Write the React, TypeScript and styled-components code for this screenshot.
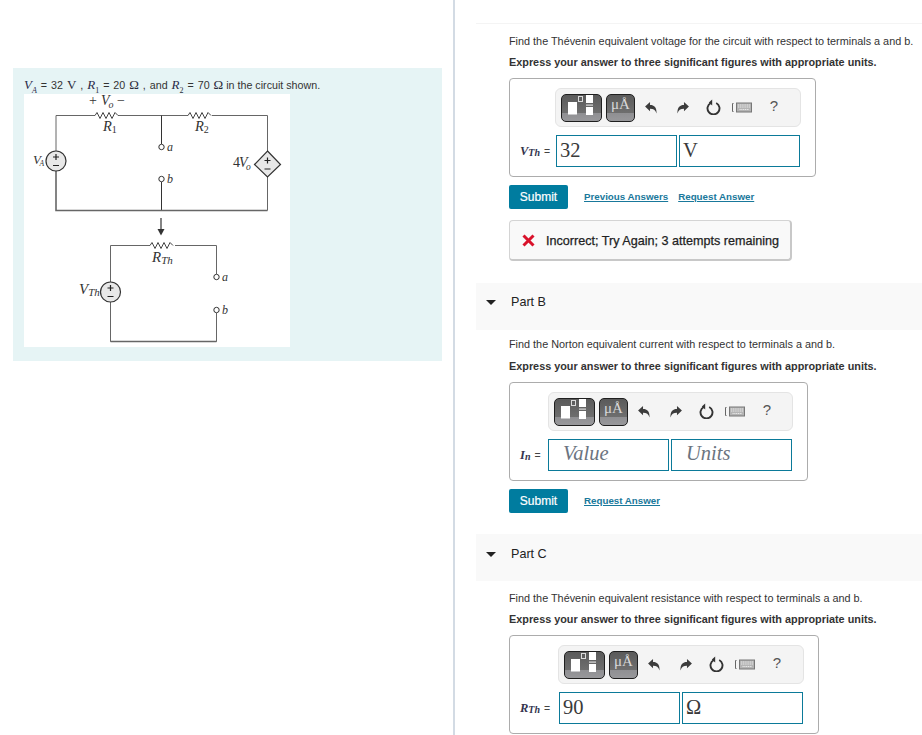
import React from "react";
import styled, { createGlobalStyle } from "styled-components";

const Global = createGlobalStyle`
  html, body { margin: 0; padding: 0; background: #fff; }
  body { font-family: "Liberation Sans", Arial, sans-serif; color: #2d2d2d; width: 922px; height: 735px; overflow: hidden; }
`;
const Page = styled.div`display: flex; width: 922px; height: 735px; overflow: hidden;`;
const LeftPane = styled.div`width: 455px; flex: none; padding: 68px 0 0 13px; box-sizing: border-box; border-right: 2px solid #d3dbe4;`;
const Intro = styled.div`width: 429px; height: 293px; background: #e6f4f5; padding: 10px 11px 0; box-sizing: border-box;`;
const IntroText = styled.div`font-size: 10.7px; line-height: 14px; height: 16px; white-space: nowrap; color: #333;`;
const MathRun = styled.span`word-spacing: 1px;`;
const MathVar = styled.span`font-family: "Liberation Serif", serif; font-style: italic; font-size: 13px; color: #2b2b4a;`;
const MathText = styled.span`font-family: "Liberation Serif", serif; font-size: 13px; color: #2b2b3a;`;
const Sub = styled.sub`font-size: 8px; line-height: 0;`;
const CircuitBox = styled.div`width: 266px; height: 253px; background: #fff; display: block;`;
const RightPane = styled.div`flex: 1; margin-left: 21px; margin-top: 23px; border-top: 1px solid #f4f4f4; min-width: 0;`;
const Part = styled.section<{ $top: number }>`padding: ${p => p.$top}px 0 0 33px;`;
const Para = styled.p<{ $strong?: boolean; $gap?: number }>`
  margin: ${p => p.$gap ?? 0}px 0 0; font-size: 10.85px; line-height: 14px; white-space: nowrap;
  font-weight: ${p => (p.$strong ? 700 : 400)}; color: #333;
`;
const AnswerBox = styled.div`
  display: grid; margin-top: 9px; border: 1px solid #acacac; border-radius: 4px;
  padding: 9px 13px 9px 10px; row-gap: 8px; box-sizing: border-box; width: max-content;
`;
const ToolbarWrap = styled.div<{ $offset: number; $width: number }>`
  margin-left: ${p => p.$offset}px; width: ${p => p.$width}px; height: 39px; box-sizing: border-box;
  border: 1px solid #e4e4e4; border-radius: 6px; background: #f4f4f4;
  display: flex; align-items: center; padding-left: 5px;
`;
const ToolBtn = styled.div<{ $w: number }>`
  width: ${p => p.$w}px; height: 28px; box-sizing: border-box; border: 1px solid #1f1f1f; border-radius: 5px;
  background: linear-gradient(#5a5a5a 0%, #6e6e6e 68%, #8f8f92 69%, #98989b 100%);
  margin-right: 4px; display: flex; align-items: center; justify-content: center; overflow: hidden; flex: none;
`;
const UnitGlyph = styled.span`font-family: "Liberation Serif", serif; font-size: 15px; color: #d8d8d8; margin-top: -6px; white-space: nowrap;`;
const IconSlot = styled.div<{ $w: number }>`width: ${p => p.$w}px; display: flex; justify-content: center; align-items: center; flex: none;`;
const Help = styled.span`font-size: 15px; color: #555; margin-top: -4px;`;
const InputRow = styled.div`display: flex; align-items: center;`;
const InputLabel = styled.div<{ $w: number }>`width: ${p => p.$w}px; flex: none; font-size: 10.5px; white-space: nowrap; color: #444;`;
const LabelVar = styled.span`font-family: "Liberation Serif", serif; font-style: italic; font-weight: 700; font-size: 12.5px; color: #33334d;`;
const LabelSub = styled.span`font-size: 10px; line-height: 0; vertical-align: -1px;`;
const LabelEq = styled.span`margin-left: 4px;`;
const Field = styled.div<{ $placeholder?: boolean }>`
  width: 121px; height: 32px; box-sizing: border-box; border: 1px solid #0b7a99; margin-right: 2px;
  font-family: "Liberation Serif", serif; font-size: 20.5px;
  line-height: ${p => (p.$placeholder ? 27 : 29)}px;
  padding-left: ${p => (p.$placeholder ? 14 : 3)}px;
  font-style: ${p => (p.$placeholder ? "italic" : "normal")};
  color: ${p => (p.$placeholder ? "#6b7480" : "#3a3a3a")};
`;
const ActionRow = styled.div`display: flex; align-items: center; margin-top: 8px;`;
const SubmitBtn = styled.div`
  width: 59px; height: 24px; background: #007c9f; color: #fff; border-radius: 2px; font-size: 12px;
  display: flex; align-items: center; justify-content: center; -webkit-text-stroke: 0.2px #fff; margin-right: 16px;
`;
const Link = styled.a`font-size: 9.75px; font-weight: 700; color: #19789b; text-decoration: underline; margin: -1px 10px 0 0; white-space: nowrap;`;
const Feedback = styled.div`
  margin-top: 11px; width: 283px; height: 41px; box-sizing: border-box; border: 1px solid #d4d4d4;
  border-bottom: 2px solid #c8c8c8; border-right: 2px solid #c8c8c8; border-radius: 4px; background: #f9f9f9;
  display: flex; align-items: center; padding: 1px 0 0 12px; font-size: 12.6px; color: #222; white-space: nowrap;
  -webkit-text-stroke: 0.25px #222;
`;
const FeedbackIcon = styled.svg`width: 13px; height: 13px; margin: -1px 11px 0 0; flex: none;`;
const PartHead = styled.div<{ $top: number; $lift: number }>`
  margin-top: ${p => p.$top}px; height: 47px; background: #f9f9f9; display: flex; align-items: center;
  font-size: 12.6px; color: #222; padding-bottom: ${p => p.$lift}px; box-sizing: border-box;
`;
const Caret = styled.span`
  width: 0; height: 0; border-left: 5px solid transparent; border-right: 5px solid transparent; border-top: 5px solid #222;
  margin: 0 15px 0 10px;
`;

const Undo = () => (
  <svg width="14" height="14" viewBox="0 0 13 13"><path d="M1 5.2 L5.6 1 V3.6 C9.6 3.6 12 6 11.6 11.6 C10.6 8.6 9 7.3 5.6 7.3 V9.6 Z" fill="#3c3c3c" /></svg>
);
const Redo = () => (
  <svg width="14" height="14" viewBox="0 0 13 13"><path d="M12 5.2 L7.4 1 V3.6 C3.4 3.6 1 6 1.4 11.6 C2.4 8.6 4 7.3 7.4 7.3 V9.6 Z" fill="#3c3c3c" /></svg>
);
const Reset = () => (
  <svg width="15" height="17" viewBox="0 0 15 17" style={{ marginTop: -2 }}><path d="M10.2 5 A6 6 0 1 1 4.8 5" fill="none" stroke="#333" strokeWidth="1.9" /><path d="M6.2 1.5 V7.6 L2.8 4.6 Z" fill="#333" /></svg>
);
const Keyboard = () => (
  <svg width="20" height="11" viewBox="0 0 20 11">
    <path d="M1.5 1.5 H0.5 V9.5 H1.5" fill="none" stroke="#666" strokeWidth="1" />
    <rect x="4.5" y="1" width="15" height="9" fill="#b4b4b4" stroke="#777" strokeWidth="1" />
    <path d="M6 3 H18 M6 5 H18 M7.5 7.5 H17" stroke="#e8e8e8" strokeWidth="1" strokeDasharray="1.2 .6" />
  </svg>
);
const TemplateIcon = () => (
  <svg width="38" height="26" viewBox="0 0 38 26">
    <rect x="5" y="7" width="9" height="12.5" fill="#fff" />
    <rect x="15.5" y="1.5" width="4" height="5" fill="none" stroke="#dcdcdc" strokeWidth="1" />
    <rect x="23" y="0" width="7" height="8" fill="#fff" />
    <rect x="23" y="9.5" width="7" height="1.2" fill="#ddd" />
    <rect x="23" y="12" width="7" height="8" fill="#fff" />
  </svg>
);

const Toolbar = ({ offset, width }: { offset: number; width: number }) => (
  <ToolbarWrap $offset={offset} $width={width}>
    <ToolBtn $w={41}><TemplateIcon /></ToolBtn>
    <ToolBtn $w={29}><UnitGlyph>μÅ</UnitGlyph></ToolBtn>
    <IconSlot $w={24}><Undo /></IconSlot>
    <IconSlot $w={40}><Redo /></IconSlot>
    <IconSlot $w={20}><Reset /></IconSlot>
    <IconSlot $w={38}><Keyboard /></IconSlot>
    <IconSlot $w={26}><Help>?</Help></IconSlot>
  </ToolbarWrap>
);

type AnswerProps = { label: string; sub: string; w: number; offset: number; tw: number; a: string; b: string; ph?: boolean };
const Answer = ({ label, sub, w, offset, tw, a, b, ph }: AnswerProps) => (
  <AnswerBox>
    <Toolbar offset={offset} width={tw} />
    <InputRow>
      <InputLabel $w={w}><LabelVar>{label}<LabelSub>{sub}</LabelSub></LabelVar><LabelEq>=</LabelEq></InputLabel>
      <Field $placeholder={ph}>{a}</Field>
      <Field $placeholder={ph}>{b}</Field>
    </InputRow>
  </AnswerBox>
);

const serif = { fontFamily: "'Liberation Serif', serif" };
const Circuit = () => (
  <svg width="266" height="253" viewBox="24 94 266 253">
    <g fill="none" stroke="#666" strokeWidth="1">
      <path d="M56 151 V115.5 H95 M118 115.5 H188 M212 115.5 H267.5 V151" />
      <path d="M95 115.5 l2 -3 l3 6 l3 -6 l3 6 l3 -6 l3 6 l3 -6 l3 3" stroke="#444" />
      <path d="M188 115.5 l2 -3 l3 6 l3 -6 l3 6 l3 -6 l3 6 l3 -6 l3 3" stroke="#444" />
      <path d="M161.5 115.5 V144 M161.5 182 V210" stroke="#333" />
      <path d="M267.5 177 V210.5" />
      <path d="M56 171 V210.5 H267.5" strokeWidth="1.6" />
      <path d="M110.5 282 V245.5 H150 M175 245.5 H216.5 V274 M216.5 313 V341.5 M110.5 302 V341.5 H216.5" />
      <path d="M150 245.5 l2 -3 l3 6 l3 -6 l3 6 l3 -6 l3 6 l3 -6 l3 3" stroke="#444" />
      <path d="M110.5 341.5 H216.5" strokeWidth="1.6" />
      <circle cx="161.5" cy="147" r="2.7" stroke="#333" />
      <circle cx="161.5" cy="179" r="2.7" stroke="#333" />
      <circle cx="216.5" cy="277" r="2.7" stroke="#333" />
      <circle cx="216.5" cy="310" r="2.7" stroke="#333" />
      <path d="M161 218 V230" stroke="#333" strokeWidth="1.2" />
    </g>
    <path d="M157.5 229 H164.5 L161 235.5 Z" fill="#333" />
    <circle cx="56" cy="161" r="10" fill="#e8e8e8" stroke="#333" strokeWidth="1.2" />
    <circle cx="110.5" cy="292" r="10" fill="#e8e8e8" stroke="#333" strokeWidth="1.2" />
    <path d="M267.5 151 L280.5 164.5 L267.5 177 L254.5 164.5 Z" fill="#e8e8e8" stroke="#333" strokeWidth="1.2" />
    <g stroke="#222" strokeWidth="1.2" fill="none">
      <path d="M53 157 H59 M56 154 V160 M53 165.5 H59" />
      <path d="M107.5 288 H113.5 M110.5 285 V291 M107.5 296.5 H113.5" />
      <path d="M264.5 160.5 H270.5 M267.5 157.5 V163.5 M264.5 169 H270.5" />
    </g>
    <g fill="#333" style={{ ...serif, fontStyle: "italic" }} fontSize="14">
      <text x="33" y="164" fontSize="13" letterSpacing="-1.5">V<tspan fontSize="7.5" dy="2">A</tspan></text>
      <text x="101" y="105" letterSpacing="-1">V<tspan fontSize="10" dy="3">o</tspan></text>
      <text x="103" y="131" fontSize="14.5">R<tspan fontSize="10" dy="2" fontStyle="normal">1</tspan></text>
      <text x="195" y="131" fontSize="14.5">R<tspan fontSize="10" dy="2" fontStyle="normal">2</tspan></text>
      <text x="167" y="151" fontSize="12">a</text>
      <text x="167" y="183" fontSize="12">b</text>
      <text x="239" y="167" letterSpacing="-1.5">V<tspan fontSize="9.5" dy="3">o</tspan></text>
      <text x="152" y="262" fontSize="15">R<tspan fontSize="11" dy="2">Th</tspan></text>
      <text x="79" y="294" fontSize="15">V<tspan fontSize="11" dy="2">Th</tspan></text>
      <text x="222" y="281" fontSize="12">a</text>
      <text x="222" y="314" fontSize="12">b</text>
    </g>
    <g fill="#333" style={serif} fontSize="14">
      <text x="89" y="105">+</text>
      <text x="117" y="105">−</text>
      <text x="233" y="167">4</text>
    </g>
  </svg>
);

export default function App() {
  return (
    <Page>
      <Global />
      <LeftPane>
        <Intro>
          <IntroText>
            <MathRun>
              <MathVar>V<Sub>A</Sub></MathVar> = 32 <MathText>V</MathText> , <MathVar>R</MathVar><MathText><Sub>1</Sub></MathText> = 20 <MathText>Ω</MathText> , and <MathVar>R</MathVar><MathText><Sub>2</Sub></MathText> = 70 <MathText>Ω</MathText>
            </MathRun>{" "}in the circuit shown.
          </IntroText>
          <CircuitBox><Circuit /></CircuitBox>
        </Intro>
      </LeftPane>
      <RightPane>
        <Part $top={10}>
          <Para>Find the The&#769;venin equivalent voltage for the circuit with respect to terminals a and b.</Para>
          <Para $strong $gap={7}>Express your answer to three significant figures with appropriate units.</Para>
          <Answer label="V" sub="Th" w={36} offset={35} tw={246} a="32" b="V" />
          <ActionRow>
            <SubmitBtn>Submit</SubmitBtn>
            <Link>Previous Answers</Link>
            <Link>Request Answer</Link>
          </ActionRow>
          <Feedback>
            <FeedbackIcon viewBox="0 0 13 13"><path d="M1.5 1.5 L11.5 11.5 M11.5 1.5 L1.5 11.5" stroke="#d9122b" strokeWidth="3" /></FeedbackIcon>
            Incorrect; Try Again; 3 attempts remaining
          </Feedback>
        </Part>
        <PartHead $top={22} $lift={9}><Caret />Part B</PartHead>
        <Part $top={7}>
          <Para>Find the Norton equivalent current with respect to terminals a and b.</Para>
          <Para $strong $gap={8}>Express your answer to three significant figures with appropriate units.</Para>
          <Answer label="I" sub="n" w={28} offset={28} tw={245} a="Value" b="Units" ph />
          <ActionRow>
            <SubmitBtn>Submit</SubmitBtn>
            <Link>Request Answer</Link>
          </ActionRow>
        </Part>
        <PartHead $top={21} $lift={7}><Caret />Part C</PartHead>
        <Part $top={10}>
          <Para>Find the The&#769;venin equivalent resistance with respect to terminals a and b.</Para>
          <Para $strong $gap={7}>Express your answer to three significant figures with appropriate units.</Para>
          <Answer label="R" sub="Th" w={39} offset={38} tw={246} a="90" b="Ω" />
        </Part>
      </RightPane>
    </Page>
  );
}
